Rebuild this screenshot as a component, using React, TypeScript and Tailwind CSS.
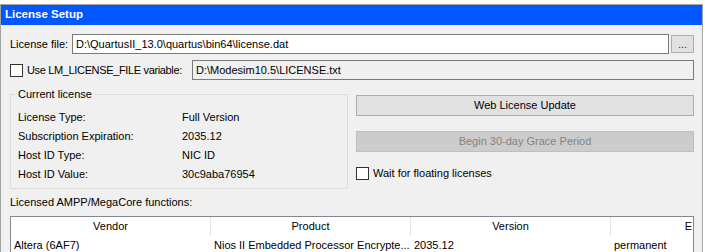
import { useState } from "react";

const font = { fontFamily: '"Liberation Sans", Arial, sans-serif' };

function CheckBox({ checked, onChange }: { checked: boolean; onChange: () => void }) {
  return (
    <button
      onClick={onChange}
      className="flex justify-center items-center bg-white border border-[#333333] w-[13px] h-[13px] shrink-0"
    >
      {checked && (
        <svg width="9" height="9" viewBox="0 0 9 9">
          <path d="M1 4.5 L3.5 7 L8 1.5" stroke="#000" strokeWidth="1.4" fill="none" />
        </svg>
      )}
    </button>
  );
}

const infoRows = [
  ["License Type:", "Full Version"],
  ["Subscription Expiration:", "2035.12"],
  ["Host ID Type:", "NIC ID"],
  ["Host ID Value:", "30c9aba76954"],
];

export default function App() {
  const [useEnv, setUseEnv] = useState(false);
  const [waitFloating, setWaitFloating] = useState(false);

  return (
    <div className="bg-white pt-[4px] w-[705px] h-[252px] overflow-hidden text-[11px] text-black" style={font}>
      <div className="flex flex-col bg-[#f0f0f0] border-[#a3a3a3] border-t border-r border-l w-[703px] h-[248px]">
        {/* title bar */}
        <div className="flex items-center bg-[#0057ff] pl-[4px] h-[20px] font-bold text-[11.5px] text-white shrink-0">
          License Setup
        </div>

        <div className="flex flex-col pt-[9px] pr-[8px] pl-[9px]">
          {/* license file */}
          <div className="flex items-center h-[20px]">
            <span className="w-[62px] whitespace-nowrap shrink-0">License file:</span>
            <div className="flex items-center bg-white px-[3px] border border-[#7a7a7a] h-[20px] grow">
              D:\QuartusII_13.0\quartus\bin64\license.dat
            </div>
            <button className="flex justify-center items-center bg-[#e1e1e1] ml-[2px] border border-[#adadad] w-[23px] h-[18px] shrink-0 text-[#1a1a6a] leading-none">
              ...
            </button>
          </div>

          {/* LM_LICENSE_FILE */}
          <div className="flex items-center mt-[6px] h-[20px]">
            <CheckBox checked={useEnv} onChange={() => setUseEnv(!useEnv)} />
            <span className="ml-[4px] w-[165px] whitespace-nowrap tracking-[-0.35px] shrink-0">
              Use LM_LICENSE_FILE variable:
            </span>
            <div className="flex items-center bg-[#f0f0f0] px-[3px] border border-[#7a7a7a] h-[20px] grow">
              D:\Modesim10.5\LICENSE.txt
            </div>
          </div>

          {/* middle section */}
          <div className="flex gap-[8px] mt-[7px]">
            <fieldset className="border border-[#dcdcdc] w-[338px] h-[102px] shrink-0">
              <legend className="ml-[5px] px-[2px] leading-[14px]">Current license</legend>
              <div className="flex flex-col pt-[7px] pl-[7px]">
                {infoRows.map(([label, value]) => (
                  <div key={label} className="flex items-center h-[19px]">
                    <span className="w-[164px] shrink-0">{label}</span>
                    <span>{value}</span>
                  </div>
                ))}
              </div>
            </fieldset>

            <div className="flex flex-col pt-[8px] grow">
              <button className="bg-[#e1e1e1] border border-[#adadad] h-[21px]">Web License Update</button>
              <button disabled className="bg-[#cccccc] mt-[15px] border border-[#bfbfbf] h-[21px] text-[#838383]">
                Begin 30-day Grace Period
              </button>
              <div className="flex items-center mt-[14px] h-[14px]">
                <CheckBox checked={waitFloating} onChange={() => setWaitFloating(!waitFloating)} />
                <span className="ml-[4px]">Wait for floating licenses</span>
              </div>
            </div>
          </div>

          <div className="flex items-center mt-[6px] h-[14px]">Licensed AMPP/MegaCore functions:</div>

          {/* table */}
          <div className="bg-white mt-[7px] border-[#828790] border-t border-r border-l h-[40px] overflow-hidden">
            <div className="flex h-[19px]">
              {["Vendor", "Product", "Version"].map((h) => (
                <div key={h} className="flex justify-center items-center border-[#e5e5e5] border-r w-[200px] shrink-0">
                  {h}
                </div>
              ))}
              <div className="flex justify-end items-center pr-[1px] grow">E</div>
            </div>
            <div className="flex items-center h-[19px]">
              <div className="pl-[3px] w-[200px] shrink-0">Altera (6AF7)</div>
              <div className="pl-[3px] w-[200px] whitespace-nowrap shrink-0">Nios II Embedded Processor Encrypte...</div>
              <div className="pl-[3px] w-[200px] shrink-0">2035.12</div>
              <div className="pl-[3px]">permanent</div>
            </div>
          </div>
        </div>
      </div>
    </div>
  );
}
